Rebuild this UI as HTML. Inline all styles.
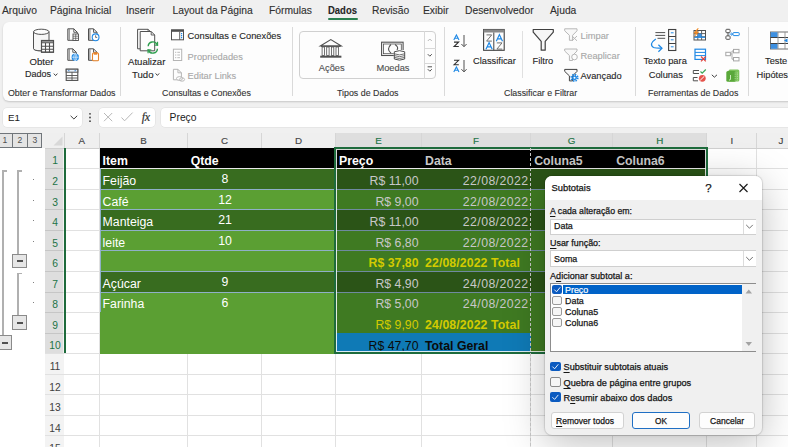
<!DOCTYPE html>
<html><head><meta charset="utf-8"><style>
html,body{margin:0;padding:0;}
body{width:788px;height:447px;overflow:hidden;position:relative;background:#f0f0f0;font-family:"Liberation Sans", sans-serif;}
div{box-sizing:border-box;}
svg{position:absolute;overflow:visible;}
u{text-underline-offset:1.5px;text-decoration-thickness:1px;}
</style></head><body>
<div style="position:absolute;left:2px;top:4.88px;font-size:10.3px;line-height:11.85px;height:11.85px;white-space:nowrap;color:#303030;font-weight:normal;-webkit-text-stroke:0.12px currentColor;">Arquivo</div>
<div style="position:absolute;left:50px;top:4.88px;font-size:10.3px;line-height:11.85px;height:11.85px;white-space:nowrap;color:#303030;font-weight:normal;-webkit-text-stroke:0.12px currentColor;">Página Inicial</div>
<div style="position:absolute;left:126px;top:4.88px;font-size:10.3px;line-height:11.85px;height:11.85px;white-space:nowrap;color:#303030;font-weight:normal;-webkit-text-stroke:0.12px currentColor;">Inserir</div>
<div style="position:absolute;left:172.5px;top:4.88px;font-size:10.3px;line-height:11.85px;height:11.85px;white-space:nowrap;color:#303030;font-weight:normal;-webkit-text-stroke:0.12px currentColor;">Layout da Página</div>
<div style="position:absolute;left:269px;top:4.88px;font-size:10.3px;line-height:11.85px;height:11.85px;white-space:nowrap;color:#303030;font-weight:normal;-webkit-text-stroke:0.12px currentColor;">Fórmulas</div>
<div style="position:absolute;left:372px;top:4.88px;font-size:10.3px;line-height:11.85px;height:11.85px;white-space:nowrap;color:#303030;font-weight:normal;-webkit-text-stroke:0.12px currentColor;">Revisão</div>
<div style="position:absolute;left:423px;top:4.88px;font-size:10.3px;line-height:11.85px;height:11.85px;white-space:nowrap;color:#303030;font-weight:normal;-webkit-text-stroke:0.12px currentColor;">Exibir</div>
<div style="position:absolute;left:465px;top:4.88px;font-size:10.3px;line-height:11.85px;height:11.85px;white-space:nowrap;color:#303030;font-weight:normal;-webkit-text-stroke:0.12px currentColor;">Desenvolvedor</div>
<div style="position:absolute;left:550px;top:4.88px;font-size:10.3px;line-height:11.85px;height:11.85px;white-space:nowrap;color:#303030;font-weight:normal;-webkit-text-stroke:0.12px currentColor;">Ajuda</div>
<div style="position:absolute;left:327.5px;top:4.88px;font-size:10.3px;line-height:11.85px;height:11.85px;white-space:nowrap;color:#262626;font-weight:bold;transform:scaleX(0.92);transform-origin:0 0;-webkit-text-stroke:0.12px currentColor;">Dados</div>
<div style="position:absolute;left:327.5px;top:17.8px;width:30px;height:2px;background:#2a8050;border-radius:1px;"></div>
<div style="position:absolute;left:2.5px;top:22px;width:830px;height:79px;background:#fdfdfd;border-radius:6px;box-shadow:0 1px 2px rgba(0,0,0,0.18);"></div>
<div style="position:absolute;left:119.5px;top:27px;width:1px;height:69px;background:#dadada;"></div>
<div style="position:absolute;left:291.5px;top:27px;width:1px;height:69px;background:#dadada;"></div>
<div style="position:absolute;left:444px;top:27px;width:1px;height:69px;background:#dadada;"></div>
<div style="position:absolute;left:635px;top:27px;width:1px;height:69px;background:#dadada;"></div>
<div style="position:absolute;left:748px;top:27px;width:1px;height:69px;background:#dadada;"></div>
<div style="position:absolute;left:522px;top:31px;width:1px;height:47px;background:#e0e0e0;"></div>
<div style="position:absolute;left:8px;top:87.88px;font-size:9.3px;line-height:10.70px;height:10.70px;white-space:nowrap;color:#333333;font-weight:normal;transform:scaleX(0.95);transform-origin:0 0;-webkit-text-stroke:0.12px currentColor;">Obter e Transformar Dados</div>
<div style="position:absolute;left:162px;top:87.88px;font-size:9.3px;line-height:10.70px;height:10.70px;white-space:nowrap;color:#333333;font-weight:normal;transform:scaleX(0.95);transform-origin:0 0;-webkit-text-stroke:0.12px currentColor;">Consultas e Conexões</div>
<div style="position:absolute;left:336.5px;top:87.88px;font-size:9.3px;line-height:10.70px;height:10.70px;white-space:nowrap;color:#333333;font-weight:normal;transform:scaleX(0.95);transform-origin:0 0;-webkit-text-stroke:0.12px currentColor;">Tipos de Dados</div>
<div style="position:absolute;left:504px;top:87.88px;font-size:9.3px;line-height:10.70px;height:10.70px;white-space:nowrap;color:#333333;font-weight:normal;transform:scaleX(0.95);transform-origin:0 0;-webkit-text-stroke:0.12px currentColor;">Classificar e Filtrar</div>
<div style="position:absolute;left:647.5px;top:87.88px;font-size:9.3px;line-height:10.70px;height:10.70px;white-space:nowrap;color:#333333;font-weight:normal;transform:scaleX(0.95);transform-origin:0 0;-webkit-text-stroke:0.12px currentColor;">Ferramentas de Dados</div>
<div style="position:absolute;left:299px;top:31px;width:136.5px;height:47.5px;border:1px solid #d0d0d0;border-radius:4px;background:#fdfdfd;"></div>
<div style="position:absolute;left:424px;top:31px;width:1px;height:47.5px;background:#d8d8d8;"></div>
<div style="position:absolute;left:424px;top:47.5px;width:11.5px;height:1px;background:#d8d8d8;"></div>
<div style="position:absolute;left:424px;top:62.5px;width:11.5px;height:1px;background:#d8d8d8;"></div>
<div style="position:absolute;left:29.5px;top:56.11px;font-size:9.6px;line-height:11.04px;height:11.04px;white-space:nowrap;color:#262626;font-weight:normal;-webkit-text-stroke:0.12px currentColor;">Obter</div>
<div style="position:absolute;left:24.7px;top:68.11px;font-size:9.6px;line-height:11.04px;height:11.04px;white-space:nowrap;color:#262626;font-weight:normal;transform:scaleX(0.94);transform-origin:0 0;-webkit-text-stroke:0.12px currentColor;">Dados</div>
<div style="position:absolute;left:128px;top:56.31px;font-size:9.6px;line-height:11.04px;height:11.04px;white-space:nowrap;color:#262626;font-weight:normal;-webkit-text-stroke:0.12px currentColor;">Atualizar</div>
<div style="position:absolute;left:132px;top:69.11px;font-size:9.6px;line-height:11.04px;height:11.04px;white-space:nowrap;color:#262626;font-weight:normal;-webkit-text-stroke:0.12px currentColor;">Tudo</div>
<div style="position:absolute;left:187.6px;top:31.28px;font-size:9.3px;line-height:10.70px;height:10.70px;white-space:nowrap;color:#262626;font-weight:normal;-webkit-text-stroke:0.12px currentColor;">Consultas e Conexões</div>
<div style="position:absolute;left:187.6px;top:51.58px;font-size:9.3px;line-height:10.70px;height:10.70px;white-space:nowrap;color:#a8a8a8;font-weight:normal;-webkit-text-stroke:0.12px currentColor;">Propriedades</div>
<div style="position:absolute;left:187.6px;top:71.38px;font-size:9.3px;line-height:10.70px;height:10.70px;white-space:nowrap;color:#a8a8a8;font-weight:normal;-webkit-text-stroke:0.12px currentColor;">Editar Links</div>
<div style="position:absolute;left:318.8px;top:63.08px;font-size:9.3px;line-height:10.70px;height:10.70px;white-space:nowrap;color:#505050;font-weight:normal;-webkit-text-stroke:0.12px currentColor;">Ações</div>
<div style="position:absolute;left:376.4px;top:63.08px;font-size:9.3px;line-height:10.70px;height:10.70px;white-space:nowrap;color:#505050;font-weight:normal;-webkit-text-stroke:0.12px currentColor;">Moedas</div>
<div style="position:absolute;left:473px;top:56.38px;font-size:9.3px;line-height:10.70px;height:10.70px;white-space:nowrap;color:#262626;font-weight:normal;-webkit-text-stroke:0.12px currentColor;">Classificar</div>
<div style="position:absolute;left:532.5px;top:56.38px;font-size:9.3px;line-height:10.70px;height:10.70px;white-space:nowrap;color:#262626;font-weight:normal;-webkit-text-stroke:0.12px currentColor;">Filtro</div>
<div style="position:absolute;left:580.5px;top:30.78px;font-size:9.3px;line-height:10.70px;height:10.70px;white-space:nowrap;color:#a8a8a8;font-weight:normal;-webkit-text-stroke:0.12px currentColor;">Limpar</div>
<div style="position:absolute;left:580.5px;top:50.58px;font-size:9.3px;line-height:10.70px;height:10.70px;white-space:nowrap;color:#a8a8a8;font-weight:normal;-webkit-text-stroke:0.12px currentColor;">Reaplicar</div>
<div style="position:absolute;left:580.5px;top:70.98px;font-size:9.3px;line-height:10.70px;height:10.70px;white-space:nowrap;color:#262626;font-weight:normal;-webkit-text-stroke:0.12px currentColor;">Avançado</div>
<div style="position:absolute;left:643.4px;top:56.38px;font-size:9.3px;line-height:10.70px;height:10.70px;white-space:nowrap;color:#262626;font-weight:normal;-webkit-text-stroke:0.12px currentColor;">Texto para</div>
<div style="position:absolute;left:648.7px;top:69.58px;font-size:9.3px;line-height:10.70px;height:10.70px;white-space:nowrap;color:#262626;font-weight:normal;-webkit-text-stroke:0.12px currentColor;">Colunas</div>
<div style="position:absolute;left:765px;top:56.38px;font-size:9.3px;line-height:10.70px;height:10.70px;white-space:nowrap;color:#262626;font-weight:normal;-webkit-text-stroke:0.12px currentColor;">Teste de</div>
<div style="position:absolute;left:756.5px;top:69.58px;font-size:9.3px;line-height:10.70px;height:10.70px;white-space:nowrap;color:#262626;font-weight:normal;-webkit-text-stroke:0.12px currentColor;">Hipóteses</div>
<div style="position:absolute;left:3px;top:107.5px;width:78.5px;height:19.5px;background:#fff;border-radius:4px;box-shadow:0 0 0 0.5px #dcdcdc;"></div>
<div style="position:absolute;left:8px;top:112.43px;font-size:9.8px;line-height:11.27px;height:11.27px;white-space:nowrap;color:#202020;font-weight:normal;">E1</div>
<div style="position:absolute;left:99px;top:108px;width:56px;height:19px;background:#fff;border-radius:4px;box-shadow:0 0 0 0.5px #dcdcdc;"></div>
<div style="position:absolute;left:160.5px;top:108px;width:640px;height:19px;background:#fff;border-radius:4px;box-shadow:0 0 0 0.5px #dcdcdc;"></div>
<div style="position:absolute;left:169.6px;top:112.48px;font-size:10.3px;line-height:11.85px;height:11.85px;white-space:nowrap;color:#202020;font-weight:normal;">Preço</div>
<div style="position:absolute;left:0px;top:148px;width:45px;height:299px;background:#fff;"></div>
<div style="position:absolute;left:64px;top:148px;width:724px;height:299px;background:#fff;"></div>
<div style="position:absolute;left:45px;top:133px;width:743px;height:15px;background:#efefef;"></div>
<div style="position:absolute;left:45px;top:148px;width:19px;height:299px;background:#f3f3f3;"></div>
<div style="position:absolute;left:45px;top:148px;width:18px;height:205px;background:#dedede;"></div>
<div style="position:absolute;left:335.5px;top:133px;width:371.5px;height:15px;background:#dedede;"></div>
<div style="position:absolute;left:45px;top:168px;width:743px;height:1px;background:#e1e1e1;"></div>
<div style="position:absolute;left:45px;top:189px;width:743px;height:1px;background:#e1e1e1;"></div>
<div style="position:absolute;left:45px;top:209px;width:743px;height:1px;background:#e1e1e1;"></div>
<div style="position:absolute;left:45px;top:230px;width:743px;height:1px;background:#e1e1e1;"></div>
<div style="position:absolute;left:45px;top:250px;width:743px;height:1px;background:#e1e1e1;"></div>
<div style="position:absolute;left:45px;top:271px;width:743px;height:1px;background:#e1e1e1;"></div>
<div style="position:absolute;left:45px;top:292px;width:743px;height:1px;background:#e1e1e1;"></div>
<div style="position:absolute;left:45px;top:312px;width:743px;height:1px;background:#e1e1e1;"></div>
<div style="position:absolute;left:45px;top:333px;width:743px;height:1px;background:#e1e1e1;"></div>
<div style="position:absolute;left:45px;top:353px;width:743px;height:1px;background:#e1e1e1;"></div>
<div style="position:absolute;left:45px;top:374px;width:743px;height:1px;background:#e1e1e1;"></div>
<div style="position:absolute;left:45px;top:394px;width:743px;height:1px;background:#e1e1e1;"></div>
<div style="position:absolute;left:45px;top:415px;width:743px;height:1px;background:#e1e1e1;"></div>
<div style="position:absolute;left:45px;top:435px;width:743px;height:1px;background:#e1e1e1;"></div>
<div style="position:absolute;left:45px;top:456px;width:743px;height:1px;background:#e1e1e1;"></div>
<div style="position:absolute;left:99px;top:148px;width:1px;height:299px;background:#e1e1e1;"></div>
<div style="position:absolute;left:187px;top:148px;width:1px;height:299px;background:#e1e1e1;"></div>
<div style="position:absolute;left:261px;top:148px;width:1px;height:299px;background:#e1e1e1;"></div>
<div style="position:absolute;left:335px;top:148px;width:1px;height:299px;background:#e1e1e1;"></div>
<div style="position:absolute;left:421px;top:148px;width:1px;height:299px;background:#e1e1e1;"></div>
<div style="position:absolute;left:530px;top:148px;width:1px;height:299px;background:#e1e1e1;"></div>
<div style="position:absolute;left:612px;top:148px;width:1px;height:299px;background:#e1e1e1;"></div>
<div style="position:absolute;left:706px;top:148px;width:1px;height:299px;background:#e1e1e1;"></div>
<div style="position:absolute;left:756px;top:148px;width:1px;height:299px;background:#e1e1e1;"></div>
<div style="position:absolute;left:45px;top:168px;width:18px;height:1px;background:#c6c6c6;"></div>
<div style="position:absolute;left:45px;top:189px;width:18px;height:1px;background:#c6c6c6;"></div>
<div style="position:absolute;left:45px;top:209px;width:18px;height:1px;background:#c6c6c6;"></div>
<div style="position:absolute;left:45px;top:230px;width:18px;height:1px;background:#c6c6c6;"></div>
<div style="position:absolute;left:45px;top:250px;width:18px;height:1px;background:#c6c6c6;"></div>
<div style="position:absolute;left:45px;top:271px;width:18px;height:1px;background:#c6c6c6;"></div>
<div style="position:absolute;left:45px;top:292px;width:18px;height:1px;background:#c6c6c6;"></div>
<div style="position:absolute;left:45px;top:312px;width:18px;height:1px;background:#c6c6c6;"></div>
<div style="position:absolute;left:45px;top:333px;width:18px;height:1px;background:#c6c6c6;"></div>
<div style="position:absolute;left:64px;top:133px;width:1px;height:15px;background:#d6d6d6;"></div>
<div style="position:absolute;left:99px;top:133px;width:1px;height:15px;background:#d6d6d6;"></div>
<div style="position:absolute;left:187px;top:133px;width:1px;height:15px;background:#d6d6d6;"></div>
<div style="position:absolute;left:261px;top:133px;width:1px;height:15px;background:#d6d6d6;"></div>
<div style="position:absolute;left:335px;top:133px;width:1px;height:15px;background:#d6d6d6;"></div>
<div style="position:absolute;left:421px;top:133px;width:1px;height:15px;background:#d6d6d6;"></div>
<div style="position:absolute;left:530px;top:133px;width:1px;height:15px;background:#d6d6d6;"></div>
<div style="position:absolute;left:612px;top:133px;width:1px;height:15px;background:#d6d6d6;"></div>
<div style="position:absolute;left:706px;top:133px;width:1px;height:15px;background:#d6d6d6;"></div>
<div style="position:absolute;left:756px;top:133px;width:1px;height:15px;background:#d6d6d6;"></div>
<div style="position:absolute;left:45px;top:147.5px;width:743px;height:1px;background:#d0d0d0;"></div>
<svg style="left:0;top:0;width:788px;height:447px;"><polygon points="62.5,136.5 62.5,145.5 53.5,145.5" fill="#d8d8d8"/></svg>
<div style="position:absolute;left:-18.25px;width:200px;top:134.73px;font-size:9.8px;line-height:11.27px;white-space:nowrap;color:#444444;font-weight:normal;text-align:center;-webkit-text-stroke:0.15px currentColor;">A</div>
<div style="position:absolute;left:43.5px;width:200px;top:134.73px;font-size:9.8px;line-height:11.27px;white-space:nowrap;color:#444444;font-weight:normal;text-align:center;-webkit-text-stroke:0.15px currentColor;">B</div>
<div style="position:absolute;left:124.5px;width:200px;top:134.73px;font-size:9.8px;line-height:11.27px;white-space:nowrap;color:#444444;font-weight:normal;text-align:center;-webkit-text-stroke:0.15px currentColor;">C</div>
<div style="position:absolute;left:198.5px;width:200px;top:134.73px;font-size:9.8px;line-height:11.27px;white-space:nowrap;color:#444444;font-weight:normal;text-align:center;-webkit-text-stroke:0.15px currentColor;">D</div>
<div style="position:absolute;left:278.5px;width:200px;top:134.73px;font-size:9.8px;line-height:11.27px;white-space:nowrap;color:#217346;font-weight:normal;text-align:center;-webkit-text-stroke:0.15px currentColor;">E</div>
<div style="position:absolute;left:376.0px;width:200px;top:134.73px;font-size:9.8px;line-height:11.27px;white-space:nowrap;color:#217346;font-weight:normal;text-align:center;-webkit-text-stroke:0.15px currentColor;">F</div>
<div style="position:absolute;left:471.5px;width:200px;top:134.73px;font-size:9.8px;line-height:11.27px;white-space:nowrap;color:#217346;font-weight:normal;text-align:center;-webkit-text-stroke:0.15px currentColor;">G</div>
<div style="position:absolute;left:559.75px;width:200px;top:134.73px;font-size:9.8px;line-height:11.27px;white-space:nowrap;color:#217346;font-weight:normal;text-align:center;-webkit-text-stroke:0.15px currentColor;">H</div>
<div style="position:absolute;left:631.75px;width:200px;top:134.73px;font-size:9.8px;line-height:11.27px;white-space:nowrap;color:#444444;font-weight:normal;text-align:center;-webkit-text-stroke:0.15px currentColor;">I</div>
<div style="position:absolute;left:681px;width:200px;top:134.73px;font-size:9.8px;line-height:11.27px;white-space:nowrap;color:#444444;font-weight:normal;text-align:center;-webkit-text-stroke:0.15px currentColor;">J</div>
<div style="position:absolute;left:-45px;width:200px;top:155.48px;font-size:10.3px;line-height:11.85px;white-space:nowrap;color:#217346;font-weight:normal;text-align:center;">1</div>
<div style="position:absolute;left:-45px;width:200px;top:176.03px;font-size:10.3px;line-height:11.85px;white-space:nowrap;color:#217346;font-weight:normal;text-align:center;">2</div>
<div style="position:absolute;left:-45px;width:200px;top:196.58px;font-size:10.3px;line-height:11.85px;white-space:nowrap;color:#217346;font-weight:normal;text-align:center;">3</div>
<div style="position:absolute;left:-45px;width:200px;top:217.13px;font-size:10.3px;line-height:11.85px;white-space:nowrap;color:#217346;font-weight:normal;text-align:center;">4</div>
<div style="position:absolute;left:-45px;width:200px;top:237.68px;font-size:10.3px;line-height:11.85px;white-space:nowrap;color:#217346;font-weight:normal;text-align:center;">5</div>
<div style="position:absolute;left:-45px;width:200px;top:258.23px;font-size:10.3px;line-height:11.85px;white-space:nowrap;color:#217346;font-weight:normal;text-align:center;">6</div>
<div style="position:absolute;left:-45px;width:200px;top:278.78px;font-size:10.3px;line-height:11.85px;white-space:nowrap;color:#217346;font-weight:normal;text-align:center;">7</div>
<div style="position:absolute;left:-45px;width:200px;top:299.33px;font-size:10.3px;line-height:11.85px;white-space:nowrap;color:#217346;font-weight:normal;text-align:center;">8</div>
<div style="position:absolute;left:-45px;width:200px;top:319.88px;font-size:10.3px;line-height:11.85px;white-space:nowrap;color:#217346;font-weight:normal;text-align:center;">9</div>
<div style="position:absolute;left:-45px;width:200px;top:340.43px;font-size:10.3px;line-height:11.85px;white-space:nowrap;color:#217346;font-weight:normal;text-align:center;">10</div>
<div style="position:absolute;left:-45px;width:200px;top:360.98px;font-size:10.3px;line-height:11.85px;white-space:nowrap;color:#404040;font-weight:normal;text-align:center;">11</div>
<div style="position:absolute;left:-45px;width:200px;top:381.53px;font-size:10.3px;line-height:11.85px;white-space:nowrap;color:#404040;font-weight:normal;text-align:center;">12</div>
<div style="position:absolute;left:-45px;width:200px;top:402.08px;font-size:10.3px;line-height:11.85px;white-space:nowrap;color:#404040;font-weight:normal;text-align:center;">13</div>
<div style="position:absolute;left:-45px;width:200px;top:422.63px;font-size:10.3px;line-height:11.85px;white-space:nowrap;color:#404040;font-weight:normal;text-align:center;">14</div>
<div style="position:absolute;left:-45px;width:200px;top:443.18px;font-size:10.3px;line-height:11.85px;white-space:nowrap;color:#404040;font-weight:normal;text-align:center;">15</div>
<div style="position:absolute;left:99.5px;top:148px;width:236.0px;height:21px;background:#000000;"></div>
<div style="position:absolute;left:335.5px;top:148px;width:371.5px;height:21px;background:#000000;"></div>
<div style="position:absolute;left:99.5px;top:169px;width:236.0px;height:20px;background:#386c1f;"></div>
<div style="position:absolute;left:335.5px;top:169px;width:371.5px;height:20px;background:#2b5417;"></div>
<div style="position:absolute;left:99.5px;top:189px;width:236.0px;height:21px;background:#5b9f33;"></div>
<div style="position:absolute;left:335.5px;top:189px;width:371.5px;height:21px;background:#3f7a22;"></div>
<div style="position:absolute;left:99.5px;top:210px;width:236.0px;height:20px;background:#386c1f;"></div>
<div style="position:absolute;left:335.5px;top:210px;width:371.5px;height:20px;background:#2b5417;"></div>
<div style="position:absolute;left:99.5px;top:230px;width:236.0px;height:21px;background:#5b9f33;"></div>
<div style="position:absolute;left:335.5px;top:230px;width:371.5px;height:21px;background:#3f7a22;"></div>
<div style="position:absolute;left:99.5px;top:251px;width:236.0px;height:21px;background:#5b9f33;"></div>
<div style="position:absolute;left:335.5px;top:251px;width:371.5px;height:21px;background:#3f7a22;"></div>
<div style="position:absolute;left:99.5px;top:272px;width:236.0px;height:20px;background:#386c1f;"></div>
<div style="position:absolute;left:335.5px;top:272px;width:371.5px;height:20px;background:#2b5417;"></div>
<div style="position:absolute;left:99.5px;top:292px;width:236.0px;height:21px;background:#5b9f33;"></div>
<div style="position:absolute;left:335.5px;top:292px;width:371.5px;height:21px;background:#3f7a22;"></div>
<div style="position:absolute;left:99.5px;top:313px;width:236.0px;height:20px;background:#5b9f33;"></div>
<div style="position:absolute;left:335.5px;top:313px;width:371.5px;height:20px;background:#3f7a22;"></div>
<div style="position:absolute;left:99.5px;top:333px;width:236.0px;height:21px;background:#5b9f33;"></div>
<div style="position:absolute;left:335.5px;top:333px;width:195.0px;height:21px;background:#0f7ab6;"></div>
<div style="position:absolute;left:530.5px;top:333px;width:176.5px;height:21px;background:#3f7a22;"></div>
<div style="position:absolute;left:99.5px;top:167.5px;width:607.5px;height:1.5px;background:#e8e8e8;"></div>
<div style="position:absolute;left:99.5px;top:189px;width:235.5px;height:1px;background:#8fb0c8;"></div>
<div style="position:absolute;left:335.5px;top:189px;width:371.5px;height:1px;background:#6f8aa0;"></div>
<div style="position:absolute;left:99.5px;top:209px;width:235.5px;height:1px;background:#8fb0c8;"></div>
<div style="position:absolute;left:335.5px;top:209px;width:371.5px;height:1px;background:#6f8aa0;"></div>
<div style="position:absolute;left:99.5px;top:230px;width:235.5px;height:1px;background:#8fb0c8;"></div>
<div style="position:absolute;left:335.5px;top:230px;width:371.5px;height:1px;background:#6f8aa0;"></div>
<div style="position:absolute;left:99.5px;top:250px;width:235.5px;height:1px;background:#8fb0c8;"></div>
<div style="position:absolute;left:335.5px;top:250px;width:371.5px;height:1px;background:#6f8aa0;"></div>
<div style="position:absolute;left:99.5px;top:271px;width:235.5px;height:1px;background:#8fb0c8;"></div>
<div style="position:absolute;left:335.5px;top:271px;width:371.5px;height:1px;background:#6f8aa0;"></div>
<div style="position:absolute;left:99.5px;top:292px;width:235.5px;height:1px;background:#8fb0c8;"></div>
<div style="position:absolute;left:335.5px;top:292px;width:371.5px;height:1px;background:#6f8aa0;"></div>
<div style="position:absolute;left:99.5px;top:168px;width:1px;height:144px;background:#8fb0c8;"></div>
<div style="position:absolute;left:102.6px;top:153.57px;font-size:12.3px;line-height:14.14px;height:14.14px;white-space:nowrap;color:#ffffff;font-weight:bold;">Item</div>
<div style="position:absolute;left:190.7px;top:153.57px;font-size:12.3px;line-height:14.14px;height:14.14px;white-space:nowrap;color:#ffffff;font-weight:bold;">Qtde</div>
<div style="position:absolute;left:339px;top:153.57px;font-size:12.3px;line-height:14.14px;height:14.14px;white-space:nowrap;color:#ffffff;font-weight:bold;">Preço</div>
<div style="position:absolute;left:425px;top:153.57px;font-size:12.3px;line-height:14.14px;height:14.14px;white-space:nowrap;color:#c8c8c8;font-weight:bold;">Data</div>
<div style="position:absolute;left:534.2px;top:153.57px;font-size:12.3px;line-height:14.14px;height:14.14px;white-space:nowrap;color:#c8c8c8;font-weight:bold;">Coluna5</div>
<div style="position:absolute;left:616.2px;top:153.57px;font-size:12.3px;line-height:14.14px;height:14.14px;white-space:nowrap;color:#c8c8c8;font-weight:bold;">Coluna6</div>
<div style="position:absolute;left:102.6px;top:174.12px;font-size:12.3px;line-height:14.14px;height:14.14px;white-space:nowrap;color:#ffffff;font-weight:normal;">Feijão</div>
<div style="position:absolute;left:125px;width:200px;top:172.22px;font-size:12.3px;line-height:14.14px;white-space:nowrap;color:#ffffff;font-weight:normal;text-align:center;">8</div>
<div style="position:absolute;left:102.6px;top:194.67px;font-size:12.3px;line-height:14.14px;height:14.14px;white-space:nowrap;color:#ffffff;font-weight:normal;">Café</div>
<div style="position:absolute;left:125px;width:200px;top:192.77px;font-size:12.3px;line-height:14.14px;white-space:nowrap;color:#ffffff;font-weight:normal;text-align:center;">12</div>
<div style="position:absolute;left:102.6px;top:215.22px;font-size:12.3px;line-height:14.14px;height:14.14px;white-space:nowrap;color:#ffffff;font-weight:normal;">Manteiga</div>
<div style="position:absolute;left:125px;width:200px;top:213.32px;font-size:12.3px;line-height:14.14px;white-space:nowrap;color:#ffffff;font-weight:normal;text-align:center;">21</div>
<div style="position:absolute;left:102.6px;top:235.77px;font-size:12.3px;line-height:14.14px;height:14.14px;white-space:nowrap;color:#ffffff;font-weight:normal;">leite</div>
<div style="position:absolute;left:125px;width:200px;top:233.87px;font-size:12.3px;line-height:14.14px;white-space:nowrap;color:#ffffff;font-weight:normal;text-align:center;">10</div>
<div style="position:absolute;left:102.6px;top:276.87px;font-size:12.3px;line-height:14.14px;height:14.14px;white-space:nowrap;color:#ffffff;font-weight:normal;">Açúcar</div>
<div style="position:absolute;left:125px;width:200px;top:274.97px;font-size:12.3px;line-height:14.14px;white-space:nowrap;color:#ffffff;font-weight:normal;text-align:center;">9</div>
<div style="position:absolute;left:102.6px;top:297.42px;font-size:12.3px;line-height:14.14px;height:14.14px;white-space:nowrap;color:#ffffff;font-weight:normal;">Farinha</div>
<div style="position:absolute;left:125px;width:200px;top:295.52px;font-size:12.3px;line-height:14.14px;white-space:nowrap;color:#ffffff;font-weight:normal;text-align:center;">6</div>
<div style="position:absolute;right:369.5px;top:174.12px;font-size:12.3px;line-height:14.14px;white-space:nowrap;color:#c8c8c8;font-weight:normal;text-align:right;">R$ 11,00</div>
<div style="position:absolute;right:260px;top:174.12px;font-size:12.3px;line-height:14.14px;white-space:nowrap;color:#c8c8c8;font-weight:normal;text-align:right;letter-spacing:0.4px;margin-right:-0.4px;">22/08/2022</div>
<div style="position:absolute;right:369.5px;top:194.67px;font-size:12.3px;line-height:14.14px;white-space:nowrap;color:#c8c8c8;font-weight:normal;text-align:right;">R$ 9,00</div>
<div style="position:absolute;right:260px;top:194.67px;font-size:12.3px;line-height:14.14px;white-space:nowrap;color:#c8c8c8;font-weight:normal;text-align:right;letter-spacing:0.4px;margin-right:-0.4px;">22/08/2022</div>
<div style="position:absolute;right:369.5px;top:215.22px;font-size:12.3px;line-height:14.14px;white-space:nowrap;color:#c8c8c8;font-weight:normal;text-align:right;">R$ 11,00</div>
<div style="position:absolute;right:260px;top:215.22px;font-size:12.3px;line-height:14.14px;white-space:nowrap;color:#c8c8c8;font-weight:normal;text-align:right;letter-spacing:0.4px;margin-right:-0.4px;">22/08/2022</div>
<div style="position:absolute;right:369.5px;top:235.77px;font-size:12.3px;line-height:14.14px;white-space:nowrap;color:#c8c8c8;font-weight:normal;text-align:right;">R$ 6,80</div>
<div style="position:absolute;right:260px;top:235.77px;font-size:12.3px;line-height:14.14px;white-space:nowrap;color:#c8c8c8;font-weight:normal;text-align:right;letter-spacing:0.4px;margin-right:-0.4px;">22/08/2022</div>
<div style="position:absolute;right:369.5px;top:276.87px;font-size:12.3px;line-height:14.14px;white-space:nowrap;color:#c8c8c8;font-weight:normal;text-align:right;">R$ 4,90</div>
<div style="position:absolute;right:260px;top:276.87px;font-size:12.3px;line-height:14.14px;white-space:nowrap;color:#c8c8c8;font-weight:normal;text-align:right;letter-spacing:0.4px;margin-right:-0.4px;">24/08/2022</div>
<div style="position:absolute;right:369.5px;top:297.42px;font-size:12.3px;line-height:14.14px;white-space:nowrap;color:#c8c8c8;font-weight:normal;text-align:right;">R$ 5,00</div>
<div style="position:absolute;right:260px;top:297.42px;font-size:12.3px;line-height:14.14px;white-space:nowrap;color:#c8c8c8;font-weight:normal;text-align:right;letter-spacing:0.4px;margin-right:-0.4px;">24/08/2022</div>
<div style="position:absolute;right:369.5px;top:256.32px;font-size:12.3px;line-height:14.14px;white-space:nowrap;color:#d4cb00;font-weight:bold;text-align:right;">R$ 37,80</div>
<div style="position:absolute;left:425px;top:256.32px;font-size:12.3px;line-height:14.14px;height:14.14px;white-space:nowrap;color:#d4cb00;font-weight:bold;letter-spacing:0.1px;">22/08/2022 Total</div>
<div style="position:absolute;right:369.5px;top:317.97px;font-size:12.3px;line-height:14.14px;white-space:nowrap;color:#d4cb00;font-weight:normal;text-align:right;">R$ 9,90</div>
<div style="position:absolute;left:425px;top:317.97px;font-size:12.3px;line-height:14.14px;height:14.14px;white-space:nowrap;color:#d4cb00;font-weight:bold;letter-spacing:0.1px;">24/08/2022 Total</div>
<div style="position:absolute;right:369.5px;top:338.52px;font-size:12.3px;line-height:14.14px;white-space:nowrap;color:#0a0a0a;font-weight:normal;text-align:right;">R$ 47,70</div>
<div style="position:absolute;left:425px;top:338.52px;font-size:12.3px;line-height:14.14px;height:14.14px;white-space:nowrap;color:#0a0a0a;font-weight:bold;">Total Geral</div>
<div style="position:absolute;left:334px;top:147px;width:373.5px;height:207px;border:2px solid #1e6b3c;"></div>
<div style="position:absolute;left:336px;top:149px;width:369.5px;height:203px;border:1px solid rgba(255,255,255,0.85);"></div>
<div style="position:absolute;left:63.5px;top:148px;width:2px;height:205px;background:#1e6b3c;"></div>
<div style="position:absolute;left:335.5px;top:146.5px;width:371.5px;height:2px;background:#1e6b3c;"></div>
<div style="position:absolute;left:530px;top:148px;width:1px;height:299px;background:repeating-linear-gradient(to bottom,#c8c8c8 0 3px,transparent 3px 5px);"></div>
<div style="position:absolute;left:545px;top:176px;width:217px;height:258.5px;background:#f0f0f0;border-radius:7px;box-shadow:0 8px 40px rgba(0,0,0,0.26), 0 0 3px rgba(0,0,0,0.12), 0 0 0 1px rgba(0,0,0,0.07);overflow:hidden;"><div style="position:absolute;left:0;top:0;width:100%;height:24px;background:#ffffff;"></div></div>
<div style="position:absolute;left:551.5px;top:182.99px;font-size:9.4px;line-height:10.81px;height:10.81px;white-space:nowrap;color:#151515;font-weight:normal;-webkit-text-stroke:0.25px #151515;">Subtotais</div>
<div style="position:absolute;left:705.2px;top:181.89px;font-size:11.5px;line-height:13.22px;height:13.22px;white-space:nowrap;color:#151515;font-weight:normal;-webkit-text-stroke:0.25px #151515;">?</div>
<svg style="left:0;top:0;width:788px;height:447px;"><path d="M739.5 184 L747.5 192 M747.5 184 L739.5 192" stroke="#1a1a1a" stroke-width="1.15" fill="none"/></svg>
<div style="position:absolute;left:550.2px;top:205.97px;font-size:9.2px;line-height:10.58px;height:10.58px;white-space:nowrap;color:#151515;font-weight:normal;transform:scaleX(0.95);transform-origin:0 0;-webkit-text-stroke:0.25px #151515;"><u>A</u> cada alteração em:</div>
<div style="position:absolute;left:550.2px;top:218.5px;width:206.3px;height:16.5px;background:#fff;border:1px solid #cfcfcf;"></div>
<div style="position:absolute;left:743px;top:219.5px;width:12.5px;height:14.5px;background:#fff;border-left:1px solid #dcdcdc;"></div>
<svg style="left:0;top:0;width:788px;height:447px;"><path d="M746.2 224.9 L749.5 228.2 L752.8 224.9" stroke="#606060" stroke-width="0.9" fill="none"/></svg>
<div style="position:absolute;left:553.5px;top:221.47px;font-size:9.2px;line-height:10.58px;height:10.58px;white-space:nowrap;color:#151515;font-weight:normal;transform:scaleX(0.97);transform-origin:0 0;-webkit-text-stroke:0.25px #151515;">Data</div>
<div style="position:absolute;left:550.4px;top:238.27px;font-size:9.2px;line-height:10.58px;height:10.58px;white-space:nowrap;color:#151515;font-weight:normal;transform:scaleX(0.97);transform-origin:0 0;-webkit-text-stroke:0.25px #151515;"><u>U</u>sar função:</div>
<div style="position:absolute;left:550.2px;top:250.3px;width:206.3px;height:17.0px;background:#fff;border:1px solid #cfcfcf;"></div>
<div style="position:absolute;left:743px;top:251.3px;width:12.5px;height:15.0px;background:#fff;border-left:1px solid #dcdcdc;"></div>
<svg style="left:0;top:0;width:788px;height:447px;"><path d="M746.2 257.0 L749.5 260.3 L752.8 257.0" stroke="#606060" stroke-width="0.9" fill="none"/></svg>
<div style="position:absolute;left:553.5px;top:253.57px;font-size:9.2px;line-height:10.58px;height:10.58px;white-space:nowrap;color:#151515;font-weight:normal;transform:scaleX(0.97);transform-origin:0 0;-webkit-text-stroke:0.25px #151515;">Soma</div>
<div style="position:absolute;left:550.4px;top:270.57px;font-size:9.2px;line-height:10.58px;height:10.58px;white-space:nowrap;color:#151515;font-weight:normal;transform:scaleX(0.99);transform-origin:0 0;-webkit-text-stroke:0.25px #151515;">A<u>d</u>icionar subtotal a:</div>
<div style="position:absolute;left:550.2px;top:282.5px;width:206.3px;height:69px;background:#fff;border:1px solid #8d8d8d;"></div>
<div style="position:absolute;left:742px;top:283.5px;width:13.5px;height:67px;background:#f0f0f0;"></div>
<svg style="left:0;top:0;width:788px;height:447px;"><polygon points="745.5,293.5 748.8,289.5 752,293.5" fill="#a3a3a3"/><polygon points="745.5,342 748.8,346 752,342" fill="#a3a3a3"/></svg>
<div style="position:absolute;left:563px;top:284.7px;width:178.8px;height:9.7px;background:#0063c8;"></div>
<div style="position:absolute;left:552px;top:284.7px;width:10.3px;height:9.6px;background:#0c5bc0;border-radius:2px;"></div>
<svg style="left:0;top:0;width:788px;height:447px;"><path d="M554.3 289.6 L556.5 291.8 L560.2 287.3" stroke="#fff" stroke-width="0.9" fill="none"/></svg>
<div style="position:absolute;left:565.3px;top:284.77px;font-size:9.2px;line-height:10.58px;height:10.58px;white-space:nowrap;color:#ffffff;font-weight:normal;transform:scaleX(0.97);transform-origin:0 0;-webkit-text-stroke:0.2px #fff;">Preço</div>
<div style="position:absolute;left:552px;top:295.96999999999997px;width:10.3px;height:9.3px;background:#f6f6f6;border:1px solid #9a9a9a;border-radius:2px;"></div>
<div style="position:absolute;left:565.3px;top:296.04px;font-size:9.2px;line-height:10.58px;height:10.58px;white-space:nowrap;color:#151515;font-weight:normal;transform:scaleX(0.97);transform-origin:0 0;-webkit-text-stroke:0.25px #151515;">Data</div>
<div style="position:absolute;left:552px;top:307.03999999999996px;width:10.3px;height:9.3px;background:#f6f6f6;border:1px solid #9a9a9a;border-radius:2px;"></div>
<div style="position:absolute;left:565.3px;top:307.11px;font-size:9.2px;line-height:10.58px;height:10.58px;white-space:nowrap;color:#151515;font-weight:normal;transform:scaleX(0.97);transform-origin:0 0;-webkit-text-stroke:0.25px #151515;">Coluna5</div>
<div style="position:absolute;left:552px;top:318.10999999999996px;width:10.3px;height:9.3px;background:#f6f6f6;border:1px solid #9a9a9a;border-radius:2px;"></div>
<div style="position:absolute;left:565.3px;top:318.18px;font-size:9.2px;line-height:10.58px;height:10.58px;white-space:nowrap;color:#151515;font-weight:normal;transform:scaleX(0.97);transform-origin:0 0;-webkit-text-stroke:0.25px #151515;">Coluna6</div>
<div style="position:absolute;left:550px;top:361.6px;width:10.5px;height:9.7px;background:#0c5bc0;border-radius:2px;"></div>
<svg style="left:0;top:0;width:788px;height:447px;"><path d="M552.4 366.6 L554.6 368.8 L558.3 364.3" stroke="#fff" stroke-width="0.9" fill="none"/></svg>
<div style="position:absolute;left:563.5px;top:362.37px;font-size:9.2px;line-height:10.58px;height:10.58px;white-space:nowrap;color:#151515;font-weight:normal;-webkit-text-stroke:0.25px #151515;"><u>S</u>ubstituir subtotais atuais</div>
<div style="position:absolute;left:550px;top:376.90000000000003px;width:10.5px;height:9.7px;background:#f6f6f6;border:1px solid #8a8a8a;border-radius:2px;"></div>
<div style="position:absolute;left:563.5px;top:377.67px;font-size:9.2px;line-height:10.58px;height:10.58px;white-space:nowrap;color:#151515;font-weight:normal;-webkit-text-stroke:0.25px #151515;"><u>Q</u>uebra de página entre grupos</div>
<div style="position:absolute;left:550px;top:392.20000000000005px;width:10.5px;height:9.7px;background:#0c5bc0;border-radius:2px;"></div>
<svg style="left:0;top:0;width:788px;height:447px;"><path d="M552.4 397.2 L554.6 399.4 L558.3 394.9" stroke="#fff" stroke-width="0.9" fill="none"/></svg>
<div style="position:absolute;left:563.5px;top:392.97px;font-size:9.2px;line-height:10.58px;height:10.58px;white-space:nowrap;color:#151515;font-weight:normal;-webkit-text-stroke:0.25px #151515;">R<u>e</u>sumir abaixo dos dados</div>
<div style="position:absolute;left:551px;top:412.2px;width:72.5px;height:17px;background:#fdfdfd;border:1px solid #d2d2d2;border-radius:3px;"></div>
<div style="position:absolute;left:556.3px;top:415.97px;font-size:9.2px;line-height:10.58px;height:10.58px;white-space:nowrap;color:#151515;font-weight:normal;transform:scaleX(0.93);transform-origin:0 0;-webkit-text-stroke:0.25px #151515;"><u>R</u>emover todos</div>
<div style="position:absolute;left:632px;top:412px;width:58px;height:17.2px;background:#fdfdfd;border:1.5px solid #1f6fc4;border-radius:3px;"></div>
<div style="position:absolute;left:654.7px;top:415.97px;font-size:9.2px;line-height:10.58px;height:10.58px;white-space:nowrap;color:#151515;font-weight:normal;transform:scaleX(0.9);transform-origin:0 0;-webkit-text-stroke:0.25px #151515;">OK</div>
<div style="position:absolute;left:698.5px;top:412.2px;width:56.7px;height:17px;background:#fdfdfd;border:1px solid #d2d2d2;border-radius:3px;"></div>
<div style="position:absolute;left:709.7px;top:415.97px;font-size:9.2px;line-height:10.58px;height:10.58px;white-space:nowrap;color:#151515;font-weight:normal;transform:scaleX(0.93);transform-origin:0 0;-webkit-text-stroke:0.25px #151515;">Cancelar</div>
<div style="position:absolute;left:-1px;top:133px;width:43px;height:15px;background:#e4e4e4;border:1px solid #70757a;"></div>
<div style="position:absolute;left:12px;top:133px;width:1px;height:15px;background:#70757a;"></div>
<div style="position:absolute;left:27px;top:133px;width:1px;height:15px;background:#70757a;"></div>
<div style="position:absolute;left:-95px;width:200px;top:136.42px;font-size:8.6px;line-height:9.89px;white-space:nowrap;color:#505050;font-weight:normal;text-align:center;">1</div>
<div style="position:absolute;left:-80.2px;width:200px;top:136.42px;font-size:8.6px;line-height:9.89px;white-space:nowrap;color:#505050;font-weight:normal;text-align:center;">2</div>
<div style="position:absolute;left:-65px;width:200px;top:136.42px;font-size:8.6px;line-height:9.89px;white-space:nowrap;color:#505050;font-weight:normal;text-align:center;">3</div>
<div style="position:absolute;left:2px;top:170px;width:2px;height:165px;background:#b0b0b0;"></div>
<div style="position:absolute;left:2px;top:170px;width:5px;height:1.5px;background:#b0b0b0;"></div>
<div style="position:absolute;left:17px;top:170px;width:2px;height:84px;background:#b0b0b0;"></div>
<div style="position:absolute;left:17px;top:170px;width:5px;height:1.5px;background:#b0b0b0;"></div>
<div style="position:absolute;left:17px;top:272.5px;width:2px;height:43px;background:#b0b0b0;"></div>
<div style="position:absolute;left:17px;top:272.5px;width:4.5px;height:1.5px;background:#b0b0b0;"></div>
<div style="position:absolute;left:32.5px;top:179.1px;width:1px;height:1px;background:#808080;"></div>
<div style="position:absolute;left:32.5px;top:199.5px;width:1px;height:1px;background:#808080;"></div>
<div style="position:absolute;left:32.5px;top:220.0px;width:1px;height:1px;background:#808080;"></div>
<div style="position:absolute;left:32.5px;top:240.5px;width:1px;height:1px;background:#808080;"></div>
<div style="position:absolute;left:32.5px;top:281.5px;width:1px;height:1px;background:#808080;"></div>
<div style="position:absolute;left:32.5px;top:301.8px;width:1px;height:1px;background:#808080;"></div>
<div style="position:absolute;left:12.3px;top:253.6px;width:14.8px;height:14.8px;background:#e6e6e6;border:1px solid #8a8a8a;"></div>
<div style="position:absolute;left:16.6px;top:260.4px;width:6.5px;height:1.5px;background:#505050;"></div>
<div style="position:absolute;left:12.3px;top:315.2px;width:14.8px;height:14.8px;background:#e6e6e6;border:1px solid #8a8a8a;"></div>
<div style="position:absolute;left:16.6px;top:322.0px;width:6.5px;height:1.5px;background:#505050;"></div>
<div style="position:absolute;left:-2.5px;top:335.2px;width:14.8px;height:14.8px;background:#e6e6e6;border:1px solid #8a8a8a;"></div>
<div style="position:absolute;left:1.7999999999999998px;top:342.0px;width:6.5px;height:1.5px;background:#505050;"></div>
<svg style="left:0;top:0;width:788px;height:447px;"><g fill="none" stroke="#505050" stroke-width="1"><path d="M33.5 31.8 V48.2 Q33.5 50.8 41.2 50.8" fill="#fafafa"/><path d="M33.5 31.8 V48.5 Q34 50.8 41 50.8 L41 40.5 L49 40.5 V31.8 Z" fill="#f7f7f7" stroke="none"/><path d="M33.5 31.8 V48.5 Q34 50.8 41 50.8"/><path d="M49 31.8 V40.3"/><ellipse cx="41.25" cy="31.8" rx="7.75" ry="2.6" fill="#fdfdfd"/><rect x="41.5" y="40.5" width="12" height="11.7" fill="#fff"/></g><rect x="41.5" y="40.5" width="12" height="1.8" fill="#9a9a9a"/><path d="M41.5 42.8 H53.5 M41.5 46.2 H53.5 M41.5 49.3 H53.5 M45.5 42.8 V52.2 M49.5 42.8 V52.2" stroke="#505050" stroke-width="1.1" fill="none"/><rect x="41.5" y="40.5" width="12" height="11.7" fill="none" stroke="#505050" stroke-width="1.2"/><path d="M67.8 28.8 H73.8 L77.3 32.3 V40.3 H67.8 Z" fill="#fdfdfd" stroke="#505050" stroke-width="1"/><path d="M73.8 28.8 V32.3 H77.3" fill="none" stroke="#505050" stroke-width="0.9"/><path d="M69.2 29.2 V39.8" stroke="#505050" stroke-width="0.8"/><rect x="73" y="34" width="5.5" height="6.5" fill="#fff" stroke="#505050" stroke-width="0.9"/><path d="M73 36.2 H78.5 M73 38.3 H78.5 M75.7 34 V40.5" stroke="#505050" stroke-width="0.7"/><path d="M88.5 28.8 H93.5 L97.0 32.3 V40.3 H88.5 Z" fill="#fdfdfd" stroke="#505050" stroke-width="1"/><path d="M93.5 28.8 V32.3 H97.0" fill="none" stroke="#505050" stroke-width="0.9"/><path d="M89.9 29.2 V39.8" stroke="#505050" stroke-width="0.8"/><circle cx="95.6" cy="37.3" r="3.4" fill="#fff" stroke="#1e88e5" stroke-width="1.1"/><path d="M95.6 35.3 V37.4 H97.2" stroke="#505050" stroke-width="0.8" fill="none"/><path d="M67.8 48.8 H72.8 L76.3 52.3 V60.3 H67.8 Z" fill="#fdfdfd" stroke="#505050" stroke-width="1"/><path d="M72.8 48.8 V52.3 H76.3" fill="none" stroke="#505050" stroke-width="0.9"/><path d="M69.2 49.2 V59.8" stroke="#505050" stroke-width="0.8"/><circle cx="75.3" cy="57.2" r="3.7" fill="#1e88e5"/><path d="M71.8 57.2 H78.8 M75.3 53.6 V60.8" stroke="#fff" stroke-width="0.6"/><ellipse cx="75.3" cy="57.2" rx="1.6" ry="3.6" fill="none" stroke="#fff" stroke-width="0.6"/><path d="M88.5 48.8 H93.5 L97.0 52.3 V60.3 H88.5 Z" fill="#fdfdfd" stroke="#505050" stroke-width="1"/><path d="M93.5 48.8 V52.3 H97.0" fill="none" stroke="#505050" stroke-width="0.9"/><path d="M89.9 49.2 V59.8" stroke="#505050" stroke-width="0.8"/><rect x="92.5" y="53" width="6" height="7.8" rx="1" fill="#fff" stroke="#e8842a" stroke-width="1.1"/><rect x="93.8" y="52.3" width="3.4" height="2.4" fill="#e8842a"/><rect x="66.2" y="69.2" width="11.6" height="11.2" fill="#fff" stroke="#505050" stroke-width="1.1"/><rect x="66.2" y="69.2" width="11.6" height="3" fill="#e8f2fc" stroke="#505050" stroke-width="1"/><path d="M66.2 75.5 H77.8 M66.2 78 H77.8 M72 72.2 V80.4" stroke="#505050" stroke-width="0.9"/><path d="M67.8 70.7 L69.3 70 V71.4 Z M76.2 70.7 L74.7 70 V71.4 Z" fill="#1565c0"/><path d="M53.8 73.6 L55.6 75.6 L57.4 73.6" fill="none" stroke="#404040" stroke-width="1"/><path d="M155.6 73.4 L157.4 75.4 L159.2 73.4" fill="none" stroke="#404040" stroke-width="1"/><path d="M137.6 29.3 H148.1 L151.6 32.8 V48.8 H137.6 Z" fill="#fdfdfd" stroke="#505050" stroke-width="1"/><path d="M148.1 29.3 V32.8 H151.6" fill="none" stroke="#505050" stroke-width="0.9"/><path d="M140.2 31.5 H151.2 L154.7 35.0 V50.8 H140.2 Z" fill="#fdfdfd" stroke="#505050" stroke-width="1"/><path d="M151.2 31.5 V35.0 H154.7" fill="none" stroke="#505050" stroke-width="0.9"/><path d="M148.2 46.3 A4.6 4.6 0 0 1 157 44.6" fill="none" stroke="#2e9e4e" stroke-width="1.4"/><path d="M157.5 41.8 L157.6 45.3 L154.2 45" fill="none" stroke="#2e9e4e" stroke-width="1.2"/><path d="M157.4 48.7 A4.6 4.6 0 0 1 148.6 50.4" fill="none" stroke="#2e9e4e" stroke-width="1.4"/><path d="M148.1 53.2 L148 49.7 L151.4 50" fill="none" stroke="#2e9e4e" stroke-width="1.2"/><rect x="147" y="41.5" width="0" height="0"/><rect x="171.5" y="29.8" width="12" height="10" fill="#fff" stroke="#505050" stroke-width="1"/><rect x="171.5" y="29.8" width="12" height="2" fill="#505050"/><path d="M179.7 31.8 V39.8" stroke="#505050" stroke-width="0.9"/><path d="M181.6 33 V38.8" stroke="#1e88e5" stroke-width="1.2" stroke-dasharray="1.2 0.8"/><rect x="173.4" y="49.2" width="8.3" height="11.3" fill="#fff" stroke="#b4b4b4" stroke-width="1"/><path d="M175 52.3 H176.3 M177.3 52.3 H180 M175 55 H176.3 M177.3 55 H180 M175 57.7 H176.3 M177.3 57.7 H180" stroke="#b4b4b4" stroke-width="0.9"/><path d="M173.4 69.3 H177.9 L181.4 72.8 V79.8 H173.4 Z" fill="#fdfdfd" stroke="#b4b4b4" stroke-width="1"/><path d="M177.9 69.3 V72.8 H181.4" fill="none" stroke="#b4b4b4" stroke-width="0.9"/><ellipse cx="179.5" cy="78.5" rx="3" ry="1.9" fill="#fff" stroke="#b4b4b4" stroke-width="0.9"/><ellipse cx="182" cy="79.5" rx="2.6" ry="1.7" fill="none" stroke="#b4b4b4" stroke-width="0.9"/><path d="M320.3 46 L330.8 39.6 L341.3 46 Z" fill="#fdfdfd" stroke="#505050" stroke-width="1.1"/><path d="M321 46.2 H340.6" stroke="#505050" stroke-width="1.3"/><rect x="322.1" y="47" width="2.4" height="8.5" fill="#fdfdfd" stroke="#505050" stroke-width="0.8"/><rect x="326.7" y="47" width="2.4" height="8.5" fill="#fdfdfd" stroke="#505050" stroke-width="0.8"/><rect x="331.40000000000003" y="47" width="2.4" height="8.5" fill="#fdfdfd" stroke="#505050" stroke-width="0.8"/><rect x="336.0" y="47" width="2.4" height="8.5" fill="#fdfdfd" stroke="#505050" stroke-width="0.8"/><rect x="320.2" y="55.7" width="21.2" height="2" fill="#505050"/><rect x="381.6" y="42.2" width="21.5" height="13.3" fill="#fdfdfd" stroke="#505050" stroke-width="1.1"/><rect x="383.4" y="44" width="17.9" height="9.7" fill="none" stroke="#505050" stroke-width="0.8"/><path d="M391 44.5 Q386 49 391 53.2 M395 44.5 Q399 47 397 50" fill="none" stroke="#505050" stroke-width="1.1"/><rect x="393.8" y="50" width="11.5" height="10.6" rx="2" fill="#fdfdfd" stroke="none"/><path d="M394.3 51.8 Q399.5 49.5 404.7 51.8 V59 Q399.5 61.3 394.3 59 Z" fill="#fdfdfd" stroke="#505050" stroke-width="1"/><path d="M394.3 53.8 Q399.5 56 404.7 53.8 M394.3 55.6 Q399.5 57.8 404.7 55.6 M394.3 57.4 Q399.5 59.6 404.7 57.4" fill="none" stroke="#505050" stroke-width="0.8"/><path d="M427.8 41 L429.8 39 L431.8 41" fill="none" stroke="#b0b0b0" stroke-width="0.9"/><path d="M427.8 54.2 L429.8 56.2 L431.8 54.2" fill="none" stroke="#404040" stroke-width="0.9"/><path d="M427.6 66.8 H432 M427.8 69.2 L429.8 71.2 L431.8 69.2" fill="none" stroke="#404040" stroke-width="0.9"/><path d="M453.8 40 L456.40000000000003 35 L459.0 40 M454.84000000000003 38.3 H457.96000000000004" fill="none" stroke="#1e88e5" stroke-width="1.1"/><path d="M454.0 42.099999999999994 H458.6 L454.1 46.5 H458.8" fill="none" stroke="#303030" stroke-width="1.1"/><path d="M464 35 V46.5 M461.4 44 L464 46.7 L466.6 44" fill="none" stroke="#505050" stroke-width="1"/><path d="M454.0 60.3 H458.6 L454.1 64.7 H458.8" fill="none" stroke="#303030" stroke-width="1.1"/><path d="M453.8 71.9 L456.40000000000003 66.9 L459.0 71.9 M454.84000000000003 70.2 H457.96000000000004" fill="none" stroke="#1e88e5" stroke-width="1.1"/><path d="M464 60 V71.7 M461.4 69.2 L464 71.9 L466.6 69.2" fill="none" stroke="#505050" stroke-width="1"/><rect x="483.6" y="29.5" width="20.6" height="20.8" fill="#fdfdfd" stroke="#404040" stroke-width="1.1"/><rect x="483.6" y="29.5" width="20.6" height="3" fill="#8a8a8a"/><path d="M493.8 32.5 V50.3" stroke="#404040" stroke-width="1"/><path d="M486.5 34.9 H491.70000000000005 L486.6 41.1 H491.90000000000003" fill="none" stroke="#707070" stroke-width="1"/><path d="M486 49.2 L489.1 42.6 L492.2 49.2 M487.24 46.956 H490.96" fill="none" stroke="#1e88e5" stroke-width="1.2"/><path d="M496.3 41.2 L499.40000000000003 34.6 L502.5 41.2 M497.54 38.956 H501.26" fill="none" stroke="#1e88e5" stroke-width="1.2"/><path d="M496.8 42.9 H502.00000000000006 L496.90000000000003 49.1 H502.20000000000005" fill="none" stroke="#707070" stroke-width="1"/><path d="M533.2 29.5 H553.3 V32.2 L545.2 41.3 V50.2 H541.2 V41.3 L533.2 32.2 Z" fill="#f6f6f6" stroke="#404040" stroke-width="1.2" stroke-linejoin="round"/><path d="M564.7 28.8 H577 V30.8 L572.6 35.3 V40.3 H569.4 V35.3 L564.7 30.8 Z" fill="#f8f8f8" stroke="#b8b8b8" stroke-width="1" stroke-linejoin="round"/><path d="M572 36 L577 40.8 M577 36 L572 40.8" stroke="#b8b8b8" stroke-width="1"/><path d="M564.7 49 H577 V51 L572.6 55.5 V60.5 H569.4 V55.5 L564.7 51 Z" fill="#f8f8f8" stroke="#b8b8b8" stroke-width="1" stroke-linejoin="round"/><circle cx="574.5" cy="57" r="2.8" fill="#fdfdfd" stroke="#b8b8b8" stroke-width="1"/><path d="M564.7 69.4 H577 V71.4 L572.6 75.9 V80.9 H569.4 V75.9 L564.7 71.4 Z" fill="#f8f8f8" stroke="#404040" stroke-width="1" stroke-linejoin="round"/><circle cx="574.5" cy="77.8" r="3" fill="none" stroke="#1e88e5" stroke-width="2.2" stroke-dasharray="1.3 1.05"/><circle cx="574.5" cy="77.8" r="2.4" fill="#1e88e5"/><circle cx="574.5" cy="77.8" r="1" fill="#fff"/><path d="M655.4 32.6 H665.2 M655.4 35.4 H665.2 M657.5 38.3 H665.2" stroke="#505050" stroke-width="1"/><path d="M655.8 39 Q648.5 44 653.5 47.5 Q655 48.2 662 48.2" fill="none" stroke="#1e88e5" stroke-width="1.2"/><path d="M658.4 44.7 L662 48.2 L658.4 51.7" fill="none" stroke="#1e88e5" stroke-width="1.2"/><rect x="668.6" y="29.5" width="7.2" height="21" fill="#fdfdfd" stroke="#404040" stroke-width="1.1"/><path d="M668.6 36.5 H675.8 M668.6 43.5 H675.8" stroke="#404040" stroke-width="1"/><path d="M670.8 32.8 H673.6 M670.8 39.8 H673.6 M670.8 46.8 H673.6" stroke="#1e88e5" stroke-width="1"/><rect x="694" y="30.5" width="11.5" height="9.5" fill="#fff" stroke="#505050" stroke-width="1"/><path d="M694 33.6 H705.5 M694 36.8 H705.5 M697.8 30.5 V40 M701.6 30.5 V40" stroke="#505050" stroke-width="0.9"/><rect x="697.8" y="33.6" width="3.8" height="3.2" fill="#3d8fe0"/><path d="M694.3 37.2 H705.2" stroke="#1e88e5" stroke-width="1.3"/><path d="M697.6 28.2 L693.2 33.6 H695.8 L693.8 37.6 L699.2 31.8 H696.6 L698.8 28.2 Z" fill="#f08a24"/><rect x="695" y="49.2" width="10.5" height="10.2" fill="#fff" stroke="#1e88e5" stroke-width="1.2"/><path d="M695 52.4 H705.5 M695 55.6 H705.5" stroke="#1e88e5" stroke-width="1"/><path d="M701 56.5 L705.8 61.3 M705.8 56.5 L701 61.3" stroke="#e0443e" stroke-width="1.2"/><path d="M693.3 70.5 V73.5 H699 M693.3 70.5 H699 M693.3 77.5 V80.8 H698 M693.3 77.5 H697.5" fill="none" stroke="#505050" stroke-width="1"/><path d="M700.5 71.5 L702.2 73.2 L705.8 69.5" fill="none" stroke="#3aa757" stroke-width="1.2"/><circle cx="702.3" cy="78.3" r="3.4" fill="#e5534b"/><path d="M700.2 80.3 L704.4 76.2" stroke="#fff" stroke-width="1"/><path d="M711.8 74.8 L714.4 77.2 L717 74.8" fill="none" stroke="#404040" stroke-width="1"/><rect x="725.9" y="29.3" width="4.2" height="3.4" rx="0.8" fill="#fff" stroke="#505050" stroke-width="1"/><rect x="725.9" y="35.9" width="4.2" height="3.4" rx="0.8" fill="#fff" stroke="#505050" stroke-width="1"/><path d="M728 32.7 V35.9" stroke="#505050" stroke-width="1"/><rect x="733" y="32.6" width="6.2" height="3" rx="0.6" fill="#fff" stroke="#1e88e5" stroke-width="1"/><path d="M729.5 34.1 H732.6 M731.2 32.7 L732.7 34.1 L731.2 35.5" fill="none" stroke="#1e88e5" stroke-width="0.9"/><rect x="725.8" y="52.3" width="4.6" height="3.4" fill="#fff" stroke="#a6a6a6" stroke-width="1"/><rect x="733.5" y="49.4" width="5.5" height="3.4" fill="#fff" stroke="#a6a6a6" stroke-width="1"/><rect x="733.5" y="57.5" width="5.5" height="3.4" fill="#fff" stroke="#a6a6a6" stroke-width="1"/><path d="M730.4 54 H732 M732 51 V59.2 M732 51 H733.5 M732 59.2 H733.5" fill="none" stroke="#a6a6a6" stroke-width="0.9"/><rect x="728.5" y="69.5" width="10.8" height="12" rx="1.5" fill="#7cc35a"/><rect x="726.3" y="71" width="9.5" height="10.8" rx="1.5" fill="#5aa83a"/><path d="M735.2 72.5 V80.5 M737.4 72.5 V80.5" stroke="#b9e3a3" stroke-width="0.9" stroke-dasharray="1 0.8"/><path d="M730.5 75 V79.5 L729 80.2" fill="none" stroke="#d9f0cc" stroke-width="0.9"/><rect x="770.5" y="32" width="30" height="17" fill="#fff" stroke="#606060" stroke-width="0.9"/><rect x="770.7" y="32.2" width="7" height="5" fill="#3d8fe0"/><rect x="770.7" y="43.8" width="7" height="5" fill="#3d8fe0"/><path d="M770.5 37.5 H800 M770.5 43.5 H800" stroke="#404040" stroke-width="1.1"/><path d="M778 32 V49 M785 32 V49" stroke="#909090" stroke-width="0.9"/><path d="M784 40.5 L787.5 38.5 V42.5 Z" fill="#1e88e5"/><path d="M70.6 115.8 L73.9 119 L77.2 115.8" fill="none" stroke="#404040" stroke-width="1"/><circle cx="90" cy="113.8" r="0.9" fill="#404040"/><circle cx="90" cy="117.5" r="0.9" fill="#404040"/><circle cx="90" cy="121.2" r="0.9" fill="#404040"/><path d="M104 113 L112.2 121.2 M112.2 113 L104 121.2" stroke="#b8b8b8" stroke-width="1"/><path d="M121.5 117.5 L124.6 120.8 L132.6 112.6" fill="none" stroke="#b8b8b8" stroke-width="1"/></svg>
<div style="position:absolute;left:141.8px;top:111.44px;font-size:12px;line-height:13.80px;height:13.80px;white-space:nowrap;color:#303030;font-weight:normal;font-family:'Liberation Serif',serif;letter-spacing:-0.3px;-webkit-text-stroke:0.2px #303030;"><i>fx</i></div>
</body></html>
